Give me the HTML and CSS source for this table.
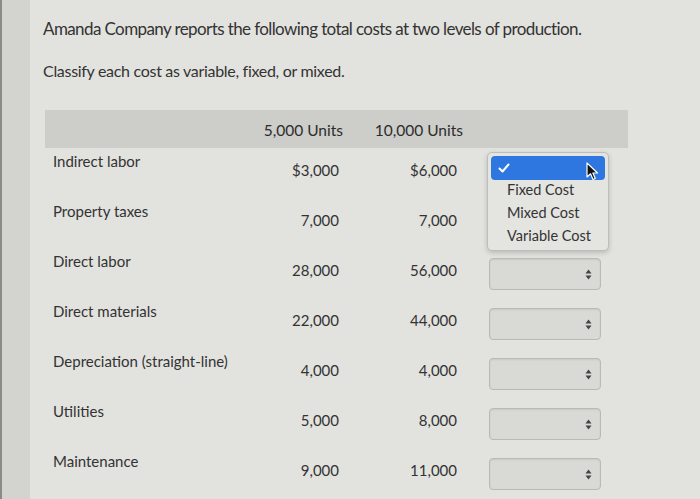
FILE: index.html
```html
<!DOCTYPE html>
<html lang="en">
<head>
<meta charset="utf-8">
<title>Cost classification</title>
<link rel="stylesheet" href="styles.css">
</head>
<body>
<div class="frame">
  <div class="bezel"></div>
  <main class="page">
    <p class="q q-title">Amanda Company reports the following total costs at two levels of production.</p>
    <p class="q q-sub">Classify each cost as variable, fixed, or mixed.</p>
    <div class="table">
      <div class="head">
        <span></span>
        <span class="num">5,000 Units</span>
        <span class="num">10,000 Units</span>
        <span></span>
      </div>
      <div class="row">
        <span class="label">Indirect labor</span>
        <span class="num val">$3,000</span>
        <span class="num val">$6,000</span>
        <span class="cell"></span>
      </div>
      <div class="row">
        <span class="label">Property taxes</span>
        <span class="num val">7,000</span>
        <span class="num val">7,000</span>
        <span class="cell"></span>
      </div>
      <div class="row">
        <span class="label">Direct labor</span>
        <span class="num val">28,000</span>
        <span class="num val">56,000</span>
        <span class="cell"><span class="select"><svg class="arrows" width="7" height="11" viewBox="0 0 7 11"><path d="M3.5 0.5 L6.5 4.5 L0.5 4.5 Z M3.5 10.5 L6.5 6.5 L0.5 6.5 Z" fill="#444"/></svg></span></span>
      </div>
      <div class="row">
        <span class="label">Direct materials</span>
        <span class="num val">22,000</span>
        <span class="num val">44,000</span>
        <span class="cell"><span class="select"><svg class="arrows" width="7" height="11" viewBox="0 0 7 11"><path d="M3.5 0.5 L6.5 4.5 L0.5 4.5 Z M3.5 10.5 L6.5 6.5 L0.5 6.5 Z" fill="#444"/></svg></span></span>
      </div>
      <div class="row">
        <span class="label">Depreciation (straight-line)</span>
        <span class="num val">4,000</span>
        <span class="num val">4,000</span>
        <span class="cell"><span class="select"><svg class="arrows" width="7" height="11" viewBox="0 0 7 11"><path d="M3.5 0.5 L6.5 4.5 L0.5 4.5 Z M3.5 10.5 L6.5 6.5 L0.5 6.5 Z" fill="#444"/></svg></span></span>
      </div>
      <div class="row">
        <span class="label">Utilities</span>
        <span class="num val">5,000</span>
        <span class="num val">8,000</span>
        <span class="cell"><span class="select"><svg class="arrows" width="7" height="11" viewBox="0 0 7 11"><path d="M3.5 0.5 L6.5 4.5 L0.5 4.5 Z M3.5 10.5 L6.5 6.5 L0.5 6.5 Z" fill="#444"/></svg></span></span>
      </div>
      <div class="row">
        <span class="label">Maintenance</span>
        <span class="num val">9,000</span>
        <span class="num val">11,000</span>
        <span class="cell"><span class="select"><svg class="arrows" width="7" height="11" viewBox="0 0 7 11"><path d="M3.5 0.5 L6.5 4.5 L0.5 4.5 Z M3.5 10.5 L6.5 6.5 L0.5 6.5 Z" fill="#444"/></svg></span></span>
      </div>

      <div class="menu">
        <div class="opt opt-sel">
          <svg class="check" width="12" height="10" viewBox="0 0 12 10"><path d="M1.5 5.5 L4.5 8.5 L10.5 1.5" fill="none" stroke="#fff" stroke-width="2" stroke-linecap="round" stroke-linejoin="round"/></svg>
          <svg class="cursor" width="13" height="19" viewBox="0 0 13 19"><path d="M1 1 L1 15 L4.5 11.8 L7 17.5 L9.3 16.5 L6.9 11 L11.5 11 Z" fill="#111" stroke="#fff" stroke-width="1.2" stroke-linejoin="round"/></svg>
        </div>
        <div class="opt">Fixed Cost</div>
        <div class="opt">Mixed Cost</div>
        <div class="opt">Variable Cost</div>
      </div>
    </div>
  </main>
</div>
</body>
</html>
```

FILE: styles.css
```css
html, body {
  margin: 0;
  padding: 0;
}
body {
  width: 700px;
  height: 499px;
  overflow: hidden;
  background: #e2e2df;
  font-family: Lato, "Open Sans", sans-serif;
  color: #333332;
}
.frame {
  display: flex;
  height: 499px;
}
.bezel {
  width: 28px;
  flex: none;
  background: #d3d3d0;
  border-left: 2px solid #8a8a87;
}
.page {
  flex: 1;
  padding: 19px 0 0 13px;
}
.q {
  margin: 0;
  font-size: 17px;
  line-height: 20px;
  letter-spacing: -0.6px;
}
.q-sub {
  margin-top: 22px;
  font-size: 16px;
  letter-spacing: -0.3px;
}
.table {
  position: relative;
  margin-top: 29px;
  margin-left: 2px;
  width: 583px;
}
.head,
.row {
  display: grid;
  grid-template-columns: 205px 89px 118px 171px;
}
.head {
  grid-template-columns: 209px 89px 120px 165px;
  height: 38px;
  align-items: center;
  background: #cdcdca;
  font-size: 15.5px;
  color: #2c2c2b;
}
.head .num {
  padding-top: 1px;
}
.row {
  height: 50px;
  align-items: start;
  font-size: 15px;
  line-height: 20px;
}
.label {
  padding: 3px 0 0 8px;
}
.num {
  text-align: right;
}
.val {
  padding-top: 12px;
}
.cell {
  padding: 10px 0 0 32px;
}
.select {
  display: flex;
  align-items: center;
  justify-content: flex-end;
  box-sizing: border-box;
  width: 112px;
  height: 32px;
  padding-right: 8px;
  background: #d9d9d6;
  border: 1px solid #b9b9b6;
  border-radius: 4px;
  box-shadow: inset 0 1px 2px rgba(0,0,0,0.08);
}
.menu {
  position: absolute;
  left: 442px;
  top: 42px;
  width: 122px;
  box-sizing: border-box;
  padding: 3px 3px 3px;
  background: #e4e4e1;
  border: 1px solid #bdbdba;
  border-radius: 5px;
  box-shadow: 0 2px 5px rgba(0,0,0,0.18);
  font-size: 14.5px;
  color: #333;
}
.opt {
  height: 23px;
  line-height: 23px;
  padding-left: 16px;
}
.opt-sel {
  display: flex;
  align-items: center;
  justify-content: space-between;
  height: 24px;
  padding: 0 6px 0 7px;
  margin-bottom: -2px;
  background: #2f77e0;
  border-radius: 4px;
}
.cursor {
  margin-top: 6px;
}
```
